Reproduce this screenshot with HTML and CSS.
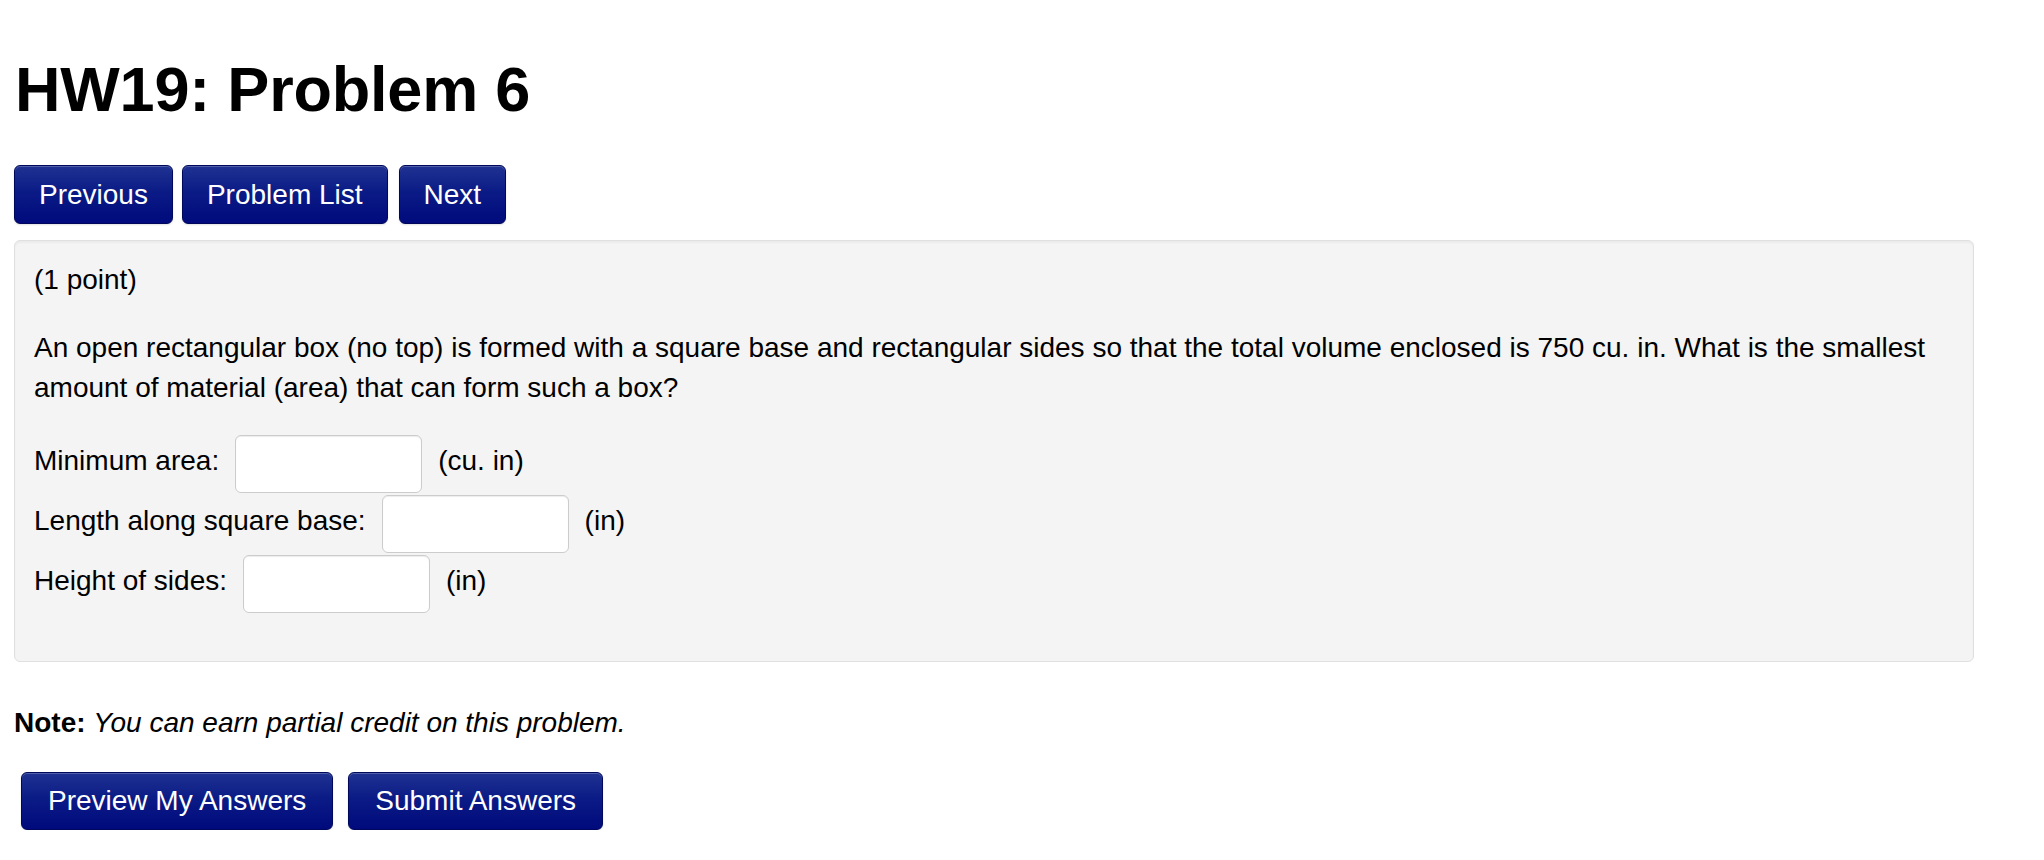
FILE: index.html
```html
<!DOCTYPE html>
<html>
<head>
<meta charset="utf-8">
<title>HW19: Problem 6</title>
<link rel="stylesheet" href="styles.css">
</head>
<body>
<div class="page">
  <h1 class="title">HW19: Problem 6</h1>
  <div class="nav">
    <a class="btn">Previous</a>
    <a class="btn">Problem List</a>
    <a class="btn">Next</a>
  </div>
  <div class="problem">
    <p class="points">(1 point)</p>
    <p class="statement">An open rectangular box (no top) is formed with a square base and rectangular sides so that the total volume enclosed is 750 cu. in. What is the smallest amount of material (area) that can form such a box?</p>
    <div class="answers">
      <div class="row"><span>Minimum area:</span><input class="field" type="text"><span>(cu. in)</span></div>
      <div class="row"><span>Length along square base:</span><input class="field" type="text"><span>(in)</span></div>
      <div class="row"><span>Height of sides:</span><input class="field" type="text"><span>(in)</span></div>
    </div>
  </div>
  <p class="note"><b>Note:</b> <i>You can earn partial credit on this problem.</i></p>
  <div class="submit">
    <a class="btn">Preview My Answers</a>
    <a class="btn">Submit Answers</a>
  </div>
</div>
</body>
</html>
```

FILE: styles.css
```css
html, body {
  margin: 0;
  padding: 0;
  background: #ffffff;
}
body {
  font-family: "Liberation Sans", Arial, Helvetica, sans-serif;
  font-size: 28px;
  line-height: 40px;
  color: #000000;
}
.page {
  padding: 0 70px 0 12px;
}
.title {
  margin: 54px 0 41px 3px;
  font-size: 63px;
  line-height: 70px;
  font-weight: bold;
  letter-spacing: -0.2px;
}
.nav {
  display: flex;
  gap: 9px;
  margin-left: 2px;
}
.btn {
  display: inline-block;
  box-sizing: border-box;
  height: 59px;
  padding: 8px 24px;
  line-height: 41px;
  font-size: 28px;
  color: #ffffff;
  border: 1px solid #00085c;
  border-radius: 6px;
  background: linear-gradient(to bottom, #1f3291 0%, #0b1b86 45%, #000a7c 100%);
  box-shadow: inset 0 1px 0 rgba(255, 255, 255, 0.22), 0 1px 2px rgba(0, 0, 0, 0.12);
  text-decoration: none;
  white-space: nowrap;
}
.nav .btn + .btn + .btn {
  margin-left: 2px;
}
.problem {
  margin: 16px 0 0 2px;
  width: 1960px;
  box-sizing: border-box;
  padding: 19px 16px 47px 19px;
  background: #f4f4f4;
  border: 1px solid #e0e0e0;
  border-radius: 6px;
  box-shadow: inset 0 2px 2px rgba(0, 0, 0, 0.04);
}
.points {
  margin: 0;
}
.statement {
  margin: 28px 0 26px 0;
}
.answers {
  display: flex;
  flex-direction: column;
}
.row {
  display: flex;
  align-items: center;
  height: 60px;
  gap: 16px;
}
.row span {
  position: relative;
  top: -3px;
}
.field {
  box-sizing: border-box;
  width: 187px;
  height: 58px;
  margin: 0;
  border: 1px solid #cccccc;
  border-radius: 6px;
  background: #ffffff;
  box-shadow: inset 0 1px 1px rgba(0, 0, 0, 0.075);
  font-size: 28px;
}
.note {
  margin: 41px 0 29px 2px;
}
.submit {
  display: flex;
  gap: 15px;
  margin-left: 9px;
}
.submit .btn {
  height: 58px;
  padding: 8px 26px;
  line-height: 40px;
}
```
